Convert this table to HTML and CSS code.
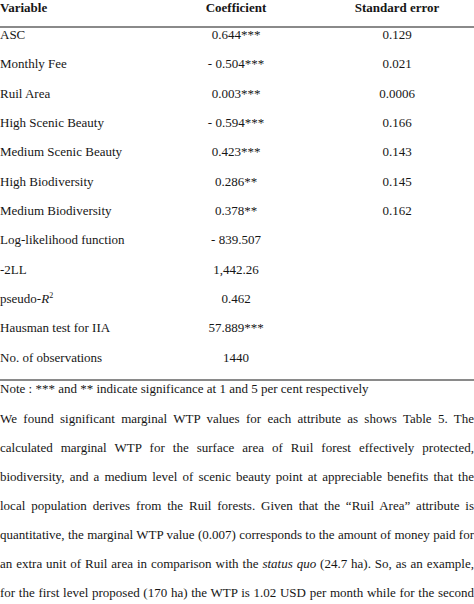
FILE: index.html
```html
<!DOCTYPE html>
<html lang="en">
<head>
<meta charset="utf-8">
<title>Table</title>
<link rel="stylesheet" href="styles.css">
</head>
<body>
<div class="page">
  <div class="table">
    <div class="row head">
      <span class="c1">Variable</span><span class="c2">Coefficient</span><span class="c3">Standard error</span>
    </div>
    <div class="tbody">
      <div class="row"><span class="c1">ASC</span><span class="c2">0.644***</span><span class="c3">0.129</span></div>
      <div class="row"><span class="c1">Monthly Fee</span><span class="c2">- 0.504***</span><span class="c3">0.021</span></div>
      <div class="row"><span class="c1">Ruil Area</span><span class="c2">0.003***</span><span class="c3">0.0006</span></div>
      <div class="row"><span class="c1">High Scenic Beauty</span><span class="c2">- 0.594***</span><span class="c3">0.166</span></div>
      <div class="row"><span class="c1">Medium Scenic Beauty</span><span class="c2">0.423***</span><span class="c3">0.143</span></div>
      <div class="row"><span class="c1">High Biodiversity</span><span class="c2">0.286**</span><span class="c3">0.145</span></div>
      <div class="row"><span class="c1">Medium Biodiversity</span><span class="c2">0.378**</span><span class="c3">0.162</span></div>
      <div class="row"><span class="c1">Log-likelihood function</span><span class="c2">- 839.507</span><span class="c3"></span></div>
      <div class="row"><span class="c1">-2LL</span><span class="c2">1,442.26</span><span class="c3"></span></div>
      <div class="row"><span class="c1">pseudo-<i>R</i><sup>2</sup></span><span class="c2">0.462</span><span class="c3"></span></div>
      <div class="row"><span class="c1">Hausman test for IIA</span><span class="c2">57.889***</span><span class="c3"></span></div>
      <div class="row"><span class="c1">No. of observations</span><span class="c2">1440</span><span class="c3"></span></div>
    </div>
  </div>
  <p class="note">Note : *** and ** indicate significance at 1 and 5 per cent respectively</p>
  <div class="para">
    <div class="ln">We found significant marginal WTP values for each attribute as shows Table 5. The</div>
    <div class="ln">calculated marginal WTP for the surface area of Ruil forest effectively protected,</div>
    <div class="ln">biodiversity, and a medium level of scenic beauty point at appreciable benefits that the</div>
    <div class="ln">local population derives from the Ruil forests. Given that the “Ruil Area” attribute is</div>
    <div class="ln">quantitative, the marginal WTP value (0.007) corresponds to the amount of money paid for</div>
    <div class="ln">an extra unit of Ruil area in comparison with the <i>status quo</i> (24.7 ha). So, as an example,</div>
    <div class="ln">for the first level proposed (170 ha) the WTP is 1.02 USD per month while for the second</div>
  </div>
</div>
</body>
</html>
```

FILE: styles.css
```css
html, body {
  margin: 0;
  padding: 0;
  background: #ffffff;
}
body {
  font-family: "Liberation Serif", "Times New Roman", serif;
  font-size: 13px;
  color: #161616;
}
.page {
  width: 474px;
  overflow: hidden;
}
.table {
  width: 474px;
}
.row {
  display: grid;
  grid-template-columns: 172px 128px 1fr;
  height: 29.35px;
  line-height: 16px;
  align-items: start;
}
.row .c2 {
  text-align: center;
}
.row .c3 {
  text-align: center;
  padding-left: 20px;
}
.head {
  height: 26px;
  font-weight: bold;
  border-bottom: 2px solid #8a8a8a;
}
.tbody .row:first-child {
  margin-top: -1px;
}
.tbody {
  border-bottom: 2px solid #8a8a8a;
}
sup {
  font-size: 8px;
  line-height: 0;
  vertical-align: 5px;
}
.note {
  margin: 0;
  line-height: 16px;
}
.para {
  margin-top: 7px;
  line-height: 29px;
}
.ln {
  text-align: justify;
  text-align-last: justify;
  white-space: nowrap;
}
```
